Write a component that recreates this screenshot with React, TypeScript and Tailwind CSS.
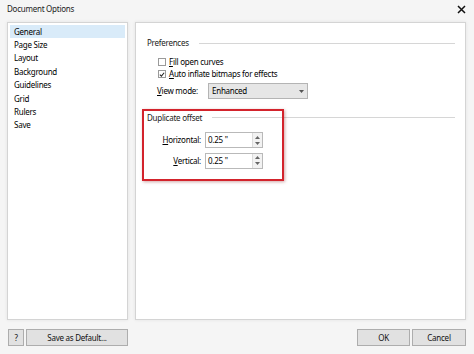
import type { ReactNode } from 'react'

const pages = ['General', 'Page Size', 'Layout', 'Background', 'Guidelines', 'Grid', 'Rulers', 'Save']

function Key({ children }: { children: ReactNode }) {
  return <span className="underline underline-offset-1">{children}</span>
}

function GroupHead({ label }: { label: string }) {
  return (
    <div className="flex h-[12px] items-center pl-[5px]">
      <span className="text-[#1a1a1a]">{label}</span>
      <span className="ml-[10px] mr-[10px] h-px flex-1 bg-[#d6d6d6]" />
    </div>
  )
}

function Check({ checked, children }: { checked?: boolean; children: ReactNode }) {
  return (
    <div className="flex h-[12.3px] items-center pl-[16px]">
      <span className="flex h-[8px] w-[8px] items-center justify-center border border-[#9a9a9a] bg-white">
        {checked && (
          <svg width="7" height="7" viewBox="0 0 7 7">
            <path d="M1 3.6 L2.8 5.4 L6 1.4" fill="none" stroke="#222" strokeWidth="1.2" />
          </svg>
        )}
      </span>
      <span className="ml-[3px]">{children}</span>
    </div>
  )
}

function Spin({ k, rest }: { k: string; rest: string }) {
  return (
    <div className="flex h-[16px] items-center">
      <span className="w-[63px] pr-[4px] text-right">
        <Key>{k}</Key>
        {rest}
      </span>
      <div className="flex h-[16px] w-[58px] border border-[#b9b9b9] bg-white">
        <span className="flex flex-1 items-center pl-[2px]">0.25 "</span>
        <span className="flex w-[10px] flex-col items-center justify-center gap-[3px] border-l border-[#dcdcdc] bg-[#f2f2f2]">
          <svg width="5" height="3" viewBox="0 0 5 3"><path d="M0 3 L2.5 0 L5 3Z" fill="#666" /></svg>
          <svg width="5" height="3" viewBox="0 0 5 3"><path d="M0 0 L2.5 3 L5 0Z" fill="#666" /></svg>
        </span>
      </div>
    </div>
  )
}

function Btn({ children, w }: { children: ReactNode; w: string }) {
  return (
    <button className={`flex h-[17px] items-center justify-center border border-[#adadad] bg-[#e1e1e1] text-[#111] ${w}`}>
      {children}
    </button>
  )
}

export default function App() {
  return (
    <div
      className="flex h-[354px] w-[474px] flex-col bg-[#f5f5f5] text-[8px] leading-none tracking-[-0.25px] text-black"
      style={{ fontFamily: '"Noto Sans", "Open Sans", sans-serif' }}
    >
      <div className="flex h-[22px] items-start justify-between pl-[7px] pr-[8px] pt-[5px]">
        <span className="text-[#222]">Document Options</span>
        <svg width="9" height="9" viewBox="0 0 9 9">
          <path d="M1 1 L8 8 M8 1 L1 8" stroke="#111" strokeWidth="1.5" />
        </svg>
      </div>

      <div className="flex h-[298px] gap-[7px] pl-[7px]">
        <div className="w-[121px] border border-[#d4d4d4] bg-white px-[2px] pt-[2px] shadow-[0_0_3px_#e2e2e2]">
          {pages.map((p, i) => (
            <div
              key={p}
              className={`flex h-[13.4px] items-center pl-[4px] ${i === 0 ? 'bg-[#d9ebf9]' : ''}`}
            >
              {p}
            </div>
          ))}
        </div>

        <div className="w-[331px] border border-[#d4d4d4] bg-white pl-[6px] pt-[14px] shadow-[0_0_3px_#e2e2e2]">
          <GroupHead label="Preferences" />
          <div className="mt-[6.7px]">
            <Check>
              <Key>F</Key>ill open curves
            </Check>
            <Check checked>
              <Key>A</Key>uto inflate bitmaps for effects
            </Check>
          </div>
          <div className="mt-[3px] flex h-[16px] items-center pl-[15px]">
            <span className="w-[51px]">
              <Key>V</Key>iew mode:
            </span>
            <div className="flex h-[16px] w-[100px] items-center justify-between border border-[#b4b4b4] bg-[#e6e6e6] pl-[3px] pr-[3px]">
              <span>Enhanced</span>
              <svg width="5" height="3" viewBox="0 0 5 3"><path d="M0 0 L2.5 3 L5 0Z" fill="#555" /></svg>
            </div>
          </div>

          <div className="relative mt-[12.7px]">
            <GroupHead label="Duplicate offset" />
            <div className="mt-[8.3px]">
              <Spin k="H" rest="orizontal:" />
            </div>
            <div className="mt-[4.5px]">
              <Spin k="V" rest="ertical:" />
            </div>
            <div className="pointer-events-none absolute left-0 top-[-3.4px] h-[72px] w-[142px] border-2 border-[#d3232c] shadow-[1px_1px_3px_rgba(120,0,0,0.35)]" />
          </div>
        </div>
      </div>

      <div className="mt-[9px] flex h-[17px] pl-[8px] pr-[8px]">
        <Btn w="w-[16px]">?</Btn>
        <div className="ml-[2px]">
          <Btn w="w-[102px]">Save as Default...</Btn>
        </div>
        <div className="ml-auto flex gap-[2px]">
          <Btn w="w-[53px]">OK</Btn>
          <Btn w="w-[54px]">Cancel</Btn>
        </div>
      </div>
    </div>
  )
}
